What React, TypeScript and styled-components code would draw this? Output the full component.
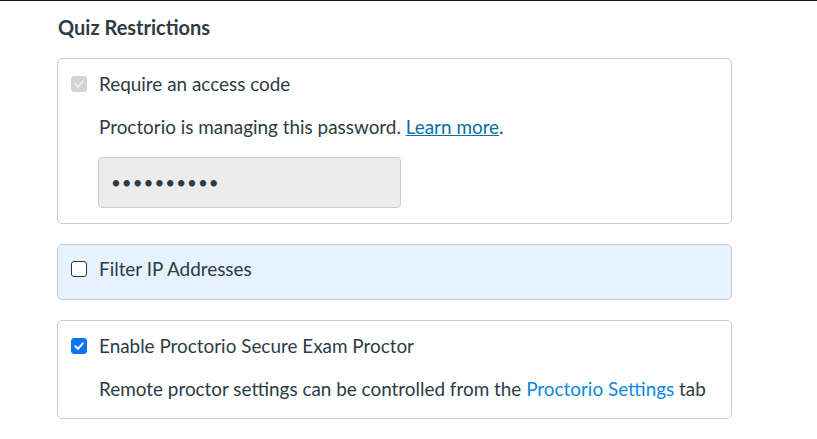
import React from 'react'
import styled, { createGlobalStyle } from 'styled-components'

const GlobalStyle = createGlobalStyle`
    body {
        margin: 0;
        background: #ffffff;
        font-family: Lato, 'Noto Sans', sans-serif;
        color: #2d3b45;
    }
`

const TopRule = styled.div`
    border-top: 1px solid #111;
    width: 100%;
`

const Page = styled.div`
    padding: 14px 0 0 57px;
    width: 675px;
`

const Title = styled.h2`
    margin: 0 0 19px 1px;
    font-size: 20px;
    font-weight: 700;
    line-height: 24px;
    color: #2d3b45;
`

const Panel = styled.div<{ $active?: boolean; $bottom?: number }>`
    box-sizing: border-box;
    border: 1px solid #c7cdd1;
    border-radius: 5px;
    background: ${(p) => (p.$active ? '#e6f2fd' : '#fff')};
    padding: ${(p) => (p.$active ? 12 : 13)}px 13px ${(p) => p.$bottom ?? 15}px;
    margin-bottom: 20px;
`

const Row = styled.label`
    display: flex;
    align-items: center;
    gap: 12px;
    font-size: 18.9px;
    line-height: 24px;
`

const Box = styled.span<{ $checked?: boolean; $disabled?: boolean }>`
    box-sizing: border-box;
    width: 16px;
    height: 16px;
    border-radius: 3px;
    display: inline-flex;
    align-items: center;
    justify-content: center;
    flex: none;
    border: ${(p) =>
        p.$disabled
            ? '1px solid #d4d4d4'
            : p.$checked
            ? '1px solid #0b74f0'
            : '1.5px solid #333'};
    background: ${(p) =>
        p.$disabled ? '#d4d4d4' : p.$checked ? '#0b74f0' : '#fff'};
`

const Note = styled.p`
    margin: 19px 0 0 28px;
    font-size: 18.9px;
    line-height: 24px;
`

const Link = styled.a<{ $plain?: boolean }>`
    color: ${(p) => (p.$plain ? '#0a8ae0' : '#0770a3')};
    text-decoration: ${(p) => (p.$plain ? 'none' : 'underline')};
`

const Code = styled.input`
    display: block;
    box-sizing: border-box;
    margin: 18px 0 0 27px;
    width: 303px;
    height: 51px;
    padding: 0 12px;
    border: 1px solid #c7cdd1;
    border-radius: 4px;
    background: #ececec;
    color: #2d3b45;
    font-family: Lato, sans-serif;
    font-size: 17px;
    letter-spacing: 1px;
    outline: none;
`

function Check({ checked, disabled }: { checked?: boolean; disabled?: boolean }) {
    return (
        <Box $checked={checked} $disabled={disabled}>
            {checked && (
                <svg width="12" height="12" viewBox="0 0 12 12">
                    <path
                        d="M2.3 6.3 L5 8.9 L9.8 3.3"
                        fill="none"
                        stroke={disabled ? '#ededed' : '#fff'}
                        strokeWidth="2"
                        strokeLinecap="round"
                        strokeLinejoin="round"
                    />
                </svg>
            )}
        </Box>
    )
}

export default function App() {
    return (
        <>
            <GlobalStyle />
            <TopRule />
            <Page>
                <Title>Quiz Restrictions</Title>

                <Panel>
                    <Row>
                        <Check checked disabled />
                        Require an access code
                    </Row>
                    <Note>
                        Proctorio is managing this password. <Link href="#">Learn more</Link>.
                    </Note>
                    <Code type="password" value="0123456789" readOnly />
                </Panel>

                <Panel $active $bottom={18}>
                    <Row>
                        <Check />
                        Filter IP Addresses
                    </Row>
                </Panel>

                <Panel $bottom={17}>
                    <Row>
                        <Check checked />
                        Enable Proctorio Secure Exam Proctor
                    </Row>
                    <Note>
                        Remote proctor settings can be controlled from the{' '}
                        <Link $plain href="#">Proctorio Settings</Link> tab
                    </Note>
                </Panel>
            </Page>
        </>
    )
}
